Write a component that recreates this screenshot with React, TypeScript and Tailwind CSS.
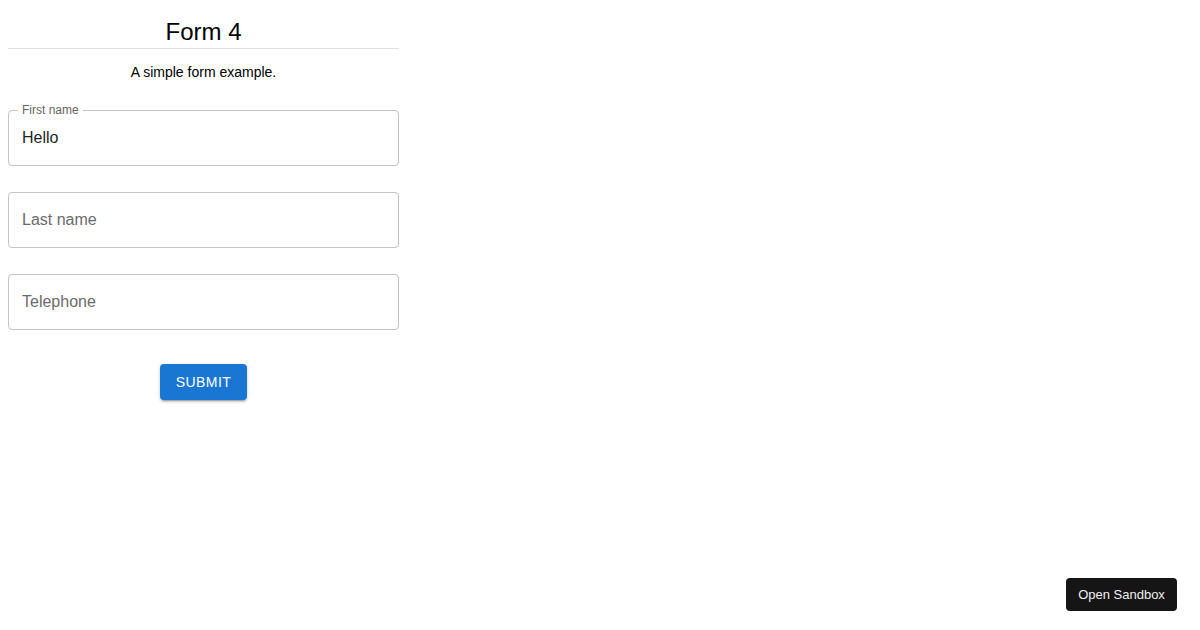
import React from 'react';

const FONT = { fontFamily: '"Liberation Sans", Arial, sans-serif' };

function OutlinedField({ label, value }: { label: string; value?: string }) {
  const filled = !!value;
  return (
    <div className="relative h-[56px] rounded-[4px] border border-[#c4c4c4] bg-white">
      {filled && (
        <span className="absolute left-[9px] top-[-7px] bg-white px-[4px] text-[12px] leading-[12px] text-[#666666]">
          {label}
        </span>
      )}
      <div className="flex h-full items-center pb-[2px] pl-[13px]">
        {filled ? (
          <span className="text-[16px] leading-[23px] text-[#1f1f1f]">{value}</span>
        ) : (
          <span className="text-[16px] leading-[23px] text-[#6b6b6b]">{label}</span>
        )}
      </div>
    </div>
  );
}

export default function App() {
  return (
    <div className="min-h-[630px] bg-white" style={FONT}>
      <div className="w-[407px] p-2">
        {/* Header */}
        <h1 className="mt-2 border-b border-[#e0e0e0] text-center text-[24px] leading-[32px] font-normal text-black">
          Form 4
        </h1>
        <p className="mt-[13px] text-center text-[14px] leading-[20px] text-black">A simple form example.</p>

        {/* Fields */}
        <div className="mt-[28px] flex flex-col gap-[26px]">
          <OutlinedField label="First name" value="Hello" />
          <OutlinedField label="Last name" />
          <OutlinedField label="Telephone" />
        </div>

        <div className="mt-[34px] flex justify-center">
          <button className="h-[36px] w-[87px] rounded-[4px] bg-[#1976d2] text-[14px] uppercase tracking-[0.4px] text-white shadow-[0_3px_1px_-2px_rgba(0,0,0,0.2),0_2px_2px_0_rgba(0,0,0,0.14),0_1px_5px_0_rgba(0,0,0,0.12)]">
            Submit
          </button>
        </div>
      </div>

      <button className="fixed bottom-[19px] right-[23px] h-[33px] w-[111px] rounded-[4px] bg-[#151515] text-[13px] text-[#f0f0f0]">
        Open Sandbox
      </button>
    </div>
  );
}
